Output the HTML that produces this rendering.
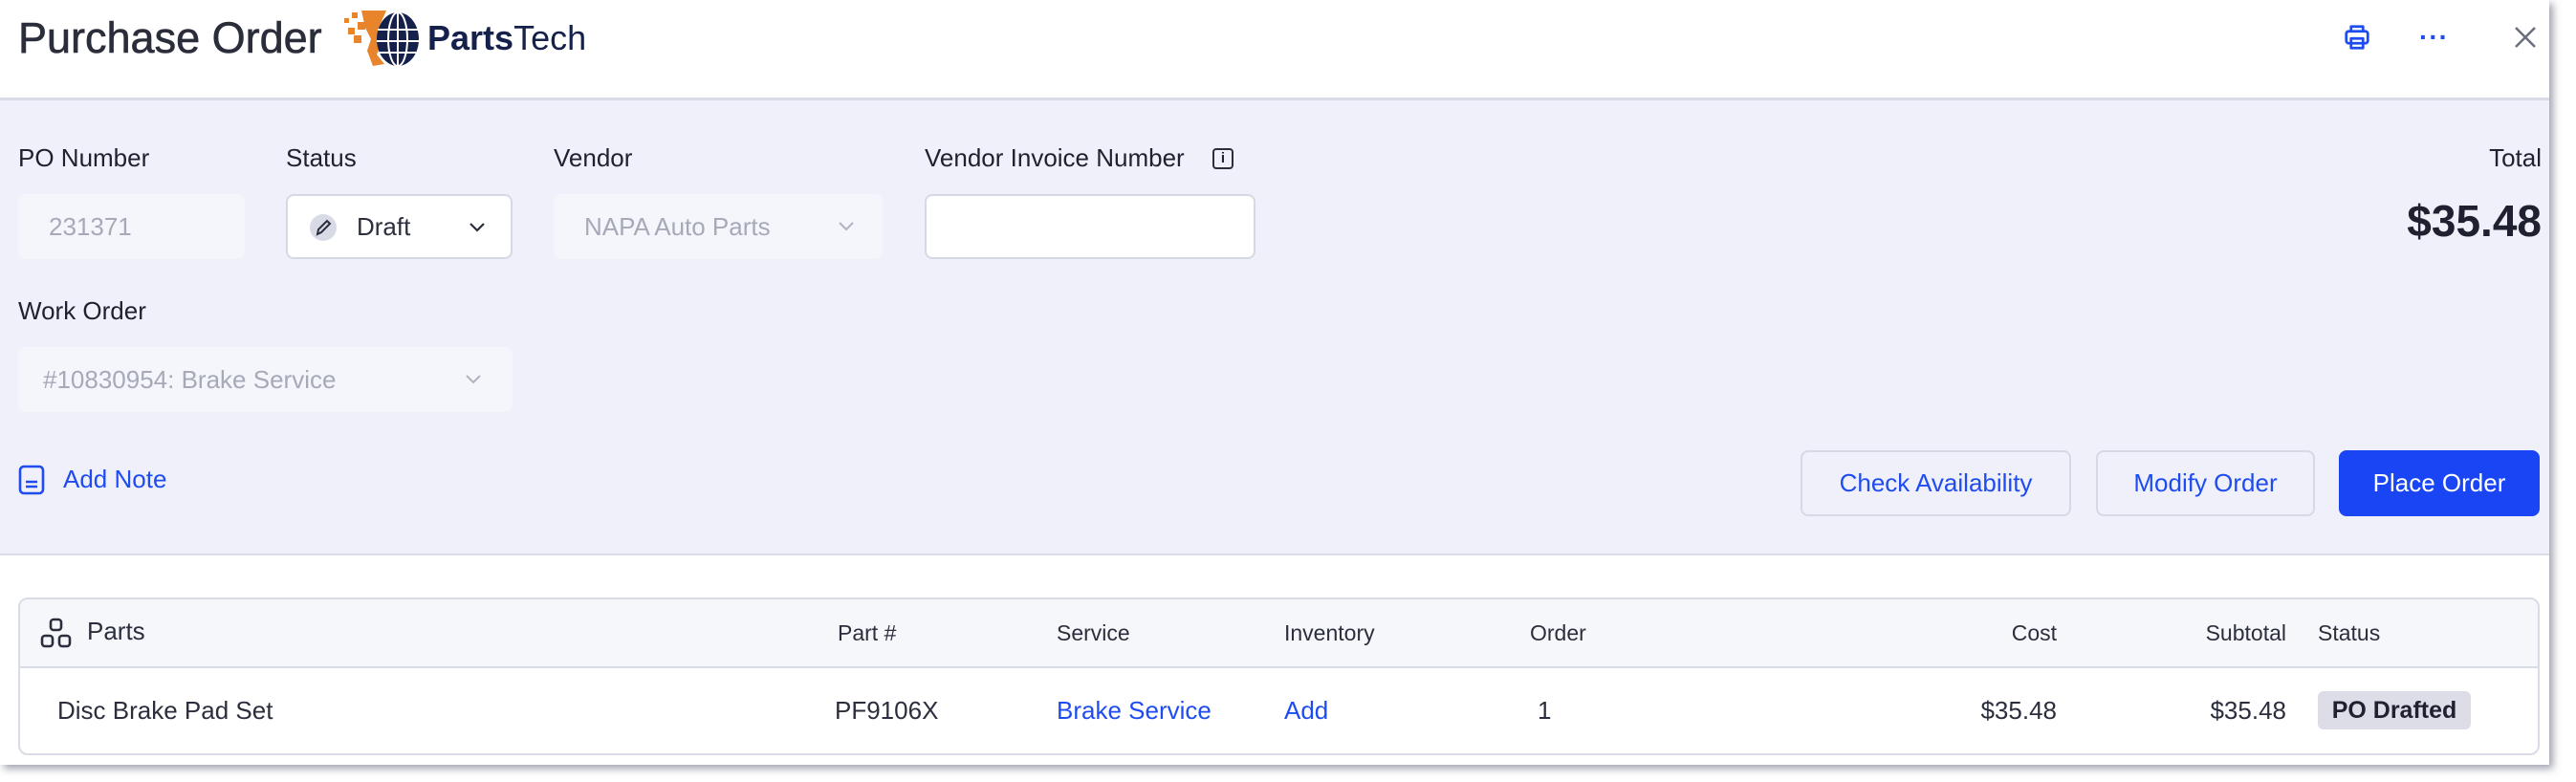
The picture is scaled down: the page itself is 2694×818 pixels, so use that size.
<!DOCTYPE html>
<html><head><meta charset="utf-8"><style>
*{box-sizing:border-box;margin:0;padding:0}
body{width:2694px;height:818px;background:#fff;font-family:"Liberation Sans",sans-serif;color:#1f2130;position:relative;overflow:hidden}
.modal{position:absolute;left:0;top:0;width:2666px;height:800px;background:#fff;box-shadow:4px 4px 8px rgba(80,85,110,.55);overflow:hidden}
.abs{position:absolute}
.hdr{left:0;top:0;width:2666px;height:105px;background:#fff;border-bottom:3px solid #d9dbe6}
.body{left:0;top:105px;width:2666px;height:476px;background:#eff0f9;border-bottom:2px solid #d9dbe6}
.lbl{font-size:26px;font-weight:500;color:#1f2130;line-height:30px}
.inp{height:68px;border-radius:8px;font-size:26px;line-height:68px;padding-left:32px}
.dis{background:#f5f6fb;color:#a6a9b8}
.wh{background:#fff;border:2px solid #d6d8e3}
.btn{height:69px;border-radius:8px;font-size:26px;line-height:65px;text-align:center;border:2px solid #d6d8e3;background:#eff0f9;color:#1f4cf0}
.th{font-size:23px;color:#2b2e3c;line-height:30px}
.td{font-size:26px;color:#2b2e3c;line-height:30px}
.blue{color:#1f4cf0}
</style></head><body>
<div class="modal">
<div class="abs hdr"></div>
<div class="abs" style="left:19px;top:12px;font-size:45px;line-height:56px;color:#2a2d3a;-webkit-text-stroke:0.6px #2a2d3a">Purchase Order</div>
<svg class="abs" style="left:360px;top:9px" width="80" height="62" viewBox="0 0 80 62">
<g fill="#e8852b"><rect x="0" y="10" width="5" height="5"/><rect x="8" y="4" width="6" height="6"/><rect x="4" y="20" width="7" height="7"/><rect x="14" y="14" width="8" height="8"/><rect x="10" y="28" width="8" height="8"/><path d="M18 2 L44 2 L36 20 L40 34 L34 48 L42 58 L30 60 L24 44 L28 32 L22 20 Z"/></g>
<ellipse cx="56" cy="32" rx="22" ry="28" fill="#15214a"/>
<g stroke="#fff" stroke-width="2" fill="none"><ellipse cx="56" cy="32" rx="10" ry="28"/><path d="M35 22 H77 M34 34 H78 M37 46 H75 M56 4 V60"/></g>
</svg>
<div class="abs" style="left:447px;top:18px;font-size:36px;line-height:44px;color:#15214a"><b>Parts</b>Tech</div>
<svg class="abs" style="left:2450px;top:24px" width="30" height="30" viewBox="0 0 24 24" fill="none" stroke="#1f4cf0" stroke-width="2.2" stroke-linejoin="round"><path d="M7 7 V3 H17 V7"/><rect x="3" y="7" width="18" height="10" rx="2"/><rect x="7" y="13" width="10" height="8"/></svg>
<div class="abs" style="left:2530px;top:23px;font-size:28px;color:#1f4cf0;letter-spacing:1px;font-weight:bold">···</div>
<svg class="abs" style="left:2628px;top:26px" width="26" height="26" viewBox="0 0 26 26" stroke="#6b6e7c" stroke-width="2.5"><path d="M3 3 L23 23 M23 3 L3 23"/></svg>

<div class="abs body"></div>
<div class="abs lbl" style="left:19px;top:150px">PO Number</div>
<div class="abs lbl" style="left:299px;top:150px">Status</div>
<div class="abs lbl" style="left:579px;top:150px">Vendor</div>
<div class="abs lbl" style="left:967px;top:150px">Vendor Invoice Number</div>
<div class="abs" style="left:1268px;top:155px;width:22px;height:22px;border:2px solid #2b2e3c;border-radius:4px;font-size:15px;text-align:center;line-height:18px;font-weight:bold">i</div>
<div class="abs lbl" style="right:8px;top:150px;text-align:right">Total</div>
<div class="abs" style="right:8px;top:203px;font-size:46px;font-weight:bold;color:#1f2130;line-height:56px">$35.48</div>

<div class="abs inp dis" style="left:19px;top:203px;width:237px">231371</div>
<div class="abs inp wh" style="left:299px;top:203px;width:237px;padding-left:0">
<div class="abs" style="left:23px;top:19px;width:28px;height:28px;border-radius:50%;background:#d8dae5"></div>
<svg class="abs" style="left:27px;top:22px" width="20" height="22" viewBox="0 0 20 22" stroke="#2b2e3c" stroke-width="2" fill="none"><path d="M4 18 L5 13 L14 4 L17 7 L8 16 Z"/></svg>
<span class="abs" style="left:72px;top:-2px;color:#2b2e3c">Draft</span>
<svg class="abs" style="left:188px;top:26px" width="20" height="14" viewBox="0 0 20 14" stroke="#2b2e3c" stroke-width="2.2" fill="none"><path d="M3 3 L10 10 L17 3"/></svg>
</div>
<div class="abs inp dis" style="left:579px;top:203px;width:344px">NAPA Auto Parts
<svg class="abs" style="left:296px;top:27px" width="20" height="14" viewBox="0 0 20 14" stroke="#b0b3c0" stroke-width="2" fill="none"><path d="M3 3 L10 10 L17 3"/></svg></div>
<div class="abs inp wh" style="left:967px;top:203px;width:346px"></div>

<div class="abs lbl" style="left:19px;top:310px">Work Order</div>
<div class="abs inp dis" style="left:19px;top:363px;width:517px;padding-left:26px">#10830954: Brake Service
<svg class="abs" style="left:466px;top:27px" width="20" height="14" viewBox="0 0 20 14" stroke="#b0b3c0" stroke-width="2" fill="none"><path d="M3 3 L10 10 L17 3"/></svg></div>

<svg class="abs" style="left:18px;top:485px" width="30" height="34" viewBox="0 0 30 34" fill="none" stroke="#1f4cf0" stroke-width="2.6"><rect x="3" y="3" width="24" height="28" rx="4"/><path d="M9 19 H21 M9 24 H21"/></svg>
<div class="abs blue" style="left:66px;top:486px;font-size:26px;line-height:30px">Add Note</div>

<div class="abs btn" style="left:1883px;top:471px;width:283px">Check Availability</div>
<div class="abs btn" style="left:2192px;top:471px;width:229px">Modify Order</div>
<div class="abs btn" style="left:2446px;top:471px;width:210px;background:#1a45f5;border-color:#1a45f5;color:#fff">Place Order</div>

<div class="abs" style="left:19px;top:625px;width:2637px;height:165px;border:2px solid #d9dbe6;border-radius:10px;overflow:hidden">
<div class="abs" style="left:0;top:0;width:100%;height:72px;background:#f6f7fb;border-bottom:2px solid #d9dbe6"></div>
</div>
<svg class="abs" style="left:42px;top:645px" width="34" height="34" viewBox="0 0 34 34" fill="none" stroke="#2b2e3c" stroke-width="2.6"><rect x="11" y="3" width="11" height="11" rx="3"/><rect x="2" y="20" width="11" height="11" rx="3"/><rect x="20" y="20" width="11" height="11" rx="3"/></svg>
<div class="abs" style="left:91px;top:645px;font-size:26px;line-height:30px;color:#2b2e3c">Parts</div>
<div class="abs th" style="left:876px;top:647px">Part #</div>
<div class="abs th" style="left:1105px;top:647px">Service</div>
<div class="abs th" style="left:1343px;top:647px">Inventory</div>
<div class="abs th" style="left:1600px;top:647px">Order</div>
<div class="abs th" style="right:515px;top:647px">Cost</div>
<div class="abs th" style="right:275px;top:647px">Subtotal</div>
<div class="abs th" style="left:2424px;top:647px">Status</div>

<div class="abs td" style="left:60px;top:728px">Disc Brake Pad Set</div>
<div class="abs td" style="left:873px;top:728px">PF9106X</div>
<div class="abs td blue" style="left:1105px;top:728px">Brake Service</div>
<div class="abs td blue" style="left:1343px;top:728px">Add</div>
<div class="abs td" style="left:1608px;top:728px">1</div>
<div class="abs td" style="right:515px;top:728px">$35.48</div>
<div class="abs td" style="right:275px;top:728px">$35.48</div>
<div class="abs" style="left:2424px;top:723px;width:160px;height:40px;border-radius:6px;background:#dcdde7;font-size:25px;font-weight:bold;line-height:40px;text-align:center;color:#1f2130">PO Drafted</div>
</div>
</body></html>
